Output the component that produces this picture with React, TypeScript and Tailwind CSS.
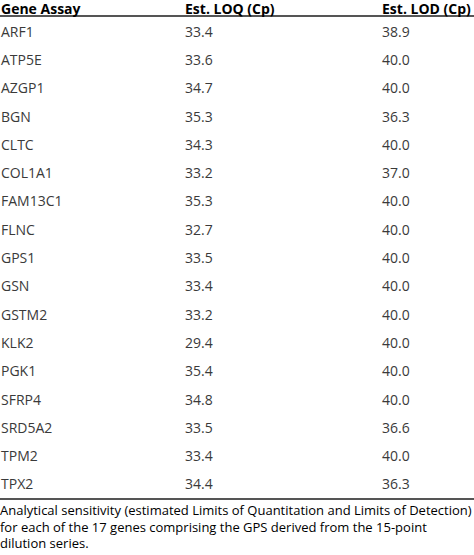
const rows: [string, string, string][] = [
  ['ARF1', '33.4', '38.9'],
  ['ATP5E', '33.6', '40.0'],
  ['AZGP1', '34.7', '40.0'],
  ['BGN', '35.3', '36.3'],
  ['CLTC', '34.3', '40.0'],
  ['COL1A1', '33.2', '37.0'],
  ['FAM13C1', '35.3', '40.0'],
  ['FLNC', '32.7', '40.0'],
  ['GPS1', '33.5', '40.0'],
  ['GSN', '33.4', '40.0'],
  ['GSTM2', '33.2', '40.0'],
  ['KLK2', '29.4', '40.0'],
  ['PGK1', '35.4', '40.0'],
  ['SFRP4', '34.8', '40.0'],
  ['SRD5A2', '33.5', '36.6'],
  ['TPM2', '33.4', '40.0'],
  ['TPX2', '34.4', '36.3'],
];

export default function App() {
  return (
    <div className="w-[474px] h-[555px] bg-white overflow-hidden font-['Open_Sans','Liberation_Sans',sans-serif]">
      <div className="grid grid-cols-[185px_197px_1fr] border-b-2 border-[#555] text-[14px] font-bold text-black leading-[17px] h-[17px]">
        <div className="pl-[1px]">Gene Assay</div>
        <div>Est. LOQ (Cp)</div>
        <div>Est. LOD (Cp)</div>
      </div>
      <div className="border-b-2 border-[#555]">
        {rows.map(([gene, loq, lod]) => (
          <div key={gene} className="grid grid-cols-[185px_197px_1fr] h-[28.3px] items-center text-[14px] text-[#3a3a3a]">
            <div className="pl-[1px]">{gene}</div>
            <div>{loq}</div>
            <div>{lod}</div>
          </div>
        ))}
      </div>
      <p className="pt-[2px] text-[13px] leading-[16.5px] text-black">
        Analytical sensitivity (estimated Limits of Quantitation and Limits of Detection) for each of the 17 genes comprising the GPS derived from the{' '}
        <span className="whitespace-nowrap">15-point</span> dilution series.
      </p>
    </div>
  );
}
